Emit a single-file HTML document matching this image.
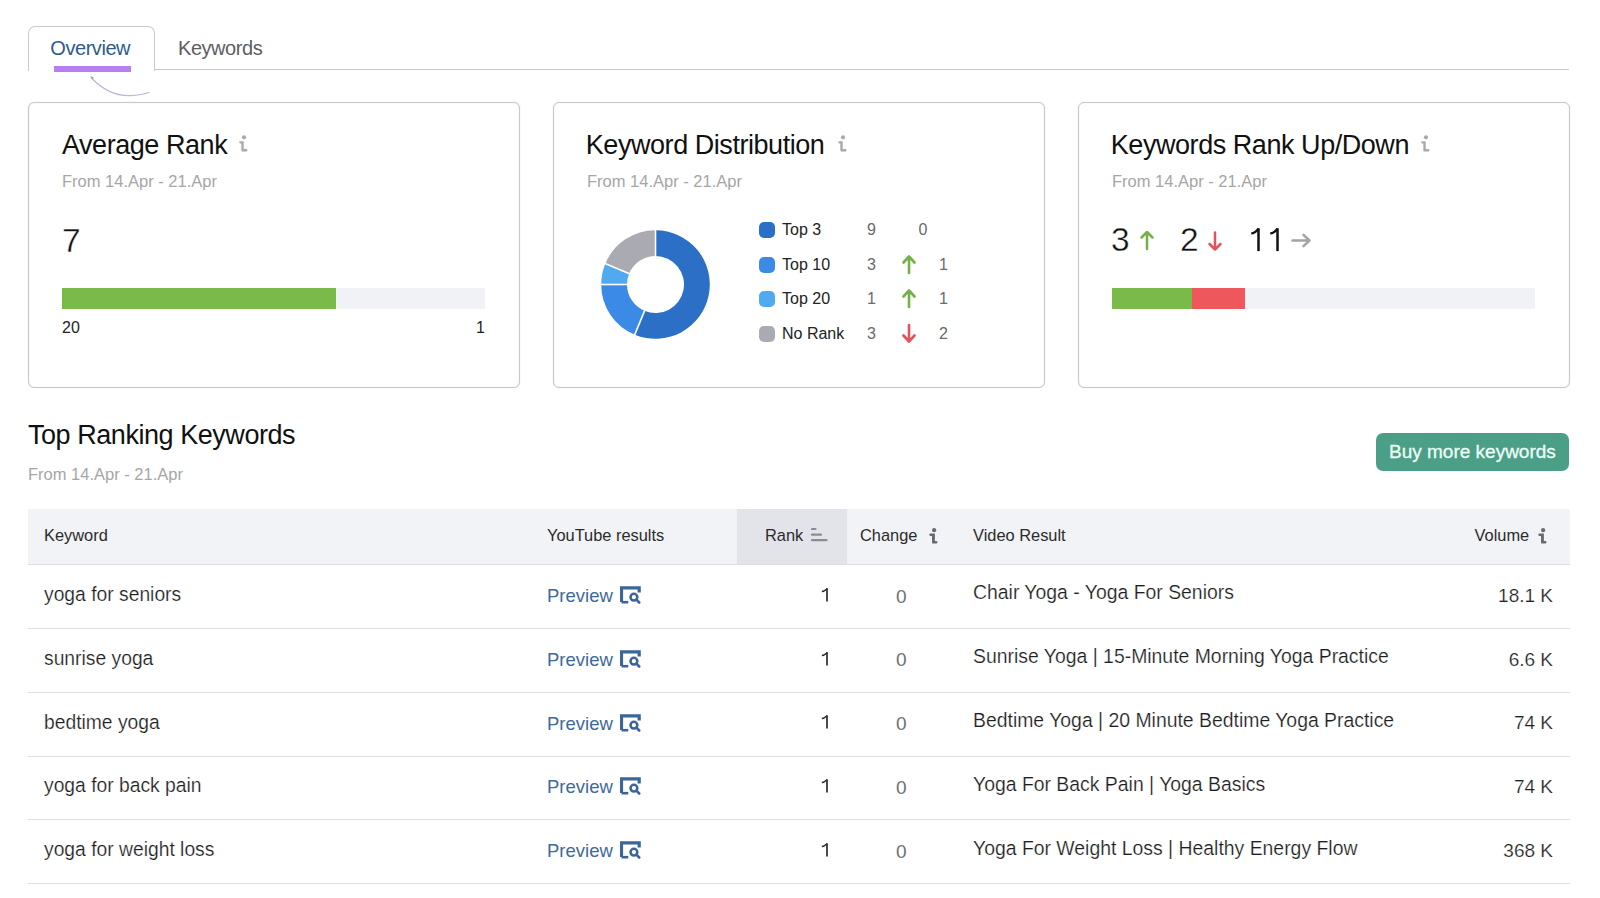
<!DOCTYPE html>
<html><head><meta charset="utf-8">
<style>
html,body{margin:0;padding:0;background:#fff;}
body{width:1600px;height:898px;position:relative;overflow:hidden;font-family:"Liberation Sans",sans-serif;color:#1a1a1a;}
.a{position:absolute;white-space:nowrap;line-height:1;}
.card{position:absolute;top:102px;width:490px;height:284px;border:1px solid #c9c9c9;border-radius:6px;box-shadow:0 0 1px rgba(0,0,0,0.22), inset 0 0 1px rgba(0,0,0,0.18);}
</style></head>
<body>
<div style="position:absolute;left:28px;top:26px;width:125px;height:44px;border:1px solid #c9c9c9;border-bottom:none;border-radius:7px 7px 0 0;"></div>
<div style="position:absolute;left:154px;top:69px;width:1415px;height:1px;background:#c9c9c9;"></div>
<div class="a" style="left:50.3px;top:37.57px;font-size:20px;color:#2f5b8c;letter-spacing:-0.45px;">Overview</div>
<div class="a" style="left:178px;top:37.57px;font-size:20px;color:#5d5e63;letter-spacing:-0.45px;">Keywords</div>
<div style="position:absolute;left:54px;top:66px;width:77px;height:6px;background:#b57ff0;"></div>
<svg style="position:absolute;left:0;top:0" width="200" height="110"><path d="M91.5 78 C 103 90, 117 96, 130 95.6 C 139 95.3, 145 94, 149.5 92.3" fill="none" stroke="#c4b2d8" stroke-width="1.15"/><path d="M90.2 76 L94 77.6 L92 79.6 Z" fill="#a898c0"/></svg>
<div class="card" style="left:28px;"></div>
<div class="a" style="left:62px;top:131.94px;font-size:27px;color:#111;letter-spacing:-0.45px;">Average Rank</div>
<div style="position:absolute;left:239px;top:135px;"><svg width="10" height="18" viewBox="0 0 10 18" style="display:block;fill:#a9a9b1"><circle cx="5" cy="2.3" r="2.1"/><path d="M0.2 7.3 Q0.2 6.2 1.3 6.2 H4.7 V14 H7.4 Q8.4 14 8.4 15.3 Q8.4 16.6 7.4 16.6 H3.3 Q2.3 16.6 2.3 15.6 V8.4 H1.3 Q0.2 8.4 0.2 7.3 Z"/></svg></div>
<div class="a" style="left:62px;top:173.03px;font-size:16.5px;color:#a6a6a6;">From 14.Apr - 21.Apr</div>
<div class="card" style="left:553px;"></div>
<div class="a" style="left:585.8px;top:131.94px;font-size:27px;color:#111;letter-spacing:-0.45px;">Keyword Distribution</div>
<div style="position:absolute;left:838px;top:135px;"><svg width="10" height="18" viewBox="0 0 10 18" style="display:block;fill:#a9a9b1"><circle cx="5" cy="2.3" r="2.1"/><path d="M0.2 7.3 Q0.2 6.2 1.3 6.2 H4.7 V14 H7.4 Q8.4 14 8.4 15.3 Q8.4 16.6 7.4 16.6 H3.3 Q2.3 16.6 2.3 15.6 V8.4 H1.3 Q0.2 8.4 0.2 7.3 Z"/></svg></div>
<div class="a" style="left:587px;top:173.03px;font-size:16.5px;color:#a6a6a6;">From 14.Apr - 21.Apr</div>
<div class="card" style="left:1078px;"></div>
<div class="a" style="left:1110.8px;top:131.94px;font-size:27px;color:#111;letter-spacing:-0.45px;">Keywords Rank Up/Down</div>
<div style="position:absolute;left:1421px;top:135px;"><svg width="10" height="18" viewBox="0 0 10 18" style="display:block;fill:#a9a9b1"><circle cx="5" cy="2.3" r="2.1"/><path d="M0.2 7.3 Q0.2 6.2 1.3 6.2 H4.7 V14 H7.4 Q8.4 14 8.4 15.3 Q8.4 16.6 7.4 16.6 H3.3 Q2.3 16.6 2.3 15.6 V8.4 H1.3 Q0.2 8.4 0.2 7.3 Z"/></svg></div>
<div class="a" style="left:1112px;top:173.03px;font-size:16.5px;color:#a6a6a6;">From 14.Apr - 21.Apr</div>
<div class="a" style="left:62px;top:223.64px;font-size:33.5px;color:#111;-webkit-text-stroke:0.4px #fff;">7</div>
<div style="position:absolute;left:62px;top:288px;width:423px;height:21px;background:#f1f2f6;"></div>
<div style="position:absolute;left:62px;top:288px;width:274px;height:21px;background:#7aba4a;"></div>
<div class="a" style="left:62px;top:320.46px;font-size:16px;color:#222;">20</div>
<div class="a" style="left:476px;top:320.46px;font-size:16px;color:#222;">1</div>
<svg style="position:absolute;left:601.2px;top:230px;overflow:visible" width="109" height="109"><path d="M54.50 0.20 A54.3 54.3 0 1 1 33.72 104.67 L43.59 80.83 A28.5 28.5 0 1 0 54.50 26.00 Z" fill="#2c6fc6"/><path d="M33.72 104.67 A54.3 54.3 0 0 1 0.20 54.50 L26.00 54.50 A28.5 28.5 0 0 0 43.59 80.83 Z" fill="#3b8be6"/><path d="M0.20 54.50 A54.3 54.3 0 0 1 4.33 33.72 L28.17 43.59 A28.5 28.5 0 0 0 26.00 54.50 Z" fill="#51a9ef"/><path d="M4.33 33.72 A54.3 54.3 0 0 1 54.50 0.20 L54.50 26.00 A28.5 28.5 0 0 0 28.17 43.59 Z" fill="#a9aab2"/><line x1="54.50" y1="27.00" x2="54.50" y2="-0.80" stroke="#fff" stroke-width="1.6"/><line x1="43.98" y1="79.91" x2="33.34" y2="105.59" stroke="#fff" stroke-width="1.6"/><line x1="27.00" y1="54.50" x2="-0.80" y2="54.50" stroke="#fff" stroke-width="1.6"/><line x1="29.09" y1="43.98" x2="3.41" y2="33.34" stroke="#fff" stroke-width="1.6"/></svg>
<div style="position:absolute;left:759px;top:222.0px;width:16px;height:16px;background:#2c6fc6;border-radius:5px;"></div>
<div class="a" style="left:782px;top:222.46px;font-size:16px;color:#222;">Top 3</div>
<div class="a" style="left:867px;top:222.46px;font-size:16px;color:#6a6a6a;">9</div>
<div class="a" style="left:918.5px;top:222.46px;font-size:16px;color:#6a6a6a;">0</div>
<div style="position:absolute;left:759px;top:256.5px;width:16px;height:16px;background:#3b8be6;border-radius:5px;"></div>
<div class="a" style="left:782px;top:256.96px;font-size:16px;color:#222;">Top 10</div>
<div class="a" style="left:867px;top:256.96px;font-size:16px;color:#6a6a6a;">3</div>
<svg style="position:absolute;left:901.3px;top:253.8px" width="16" height="21" viewBox="0 0 16 21"><path d="M8 2.5 V19 M2.5 8.5 L8 2.5 L13.5 8.5" fill="none" stroke="#74b146" stroke-width="2.6" stroke-linecap="round" stroke-linejoin="round"/></svg>
<div class="a" style="left:939px;top:256.96px;font-size:16px;color:#6a6a6a;">1</div>
<div style="position:absolute;left:759px;top:291.0px;width:16px;height:16px;background:#51a9ef;border-radius:5px;"></div>
<div class="a" style="left:782px;top:291.46px;font-size:16px;color:#222;">Top 20</div>
<div class="a" style="left:867px;top:291.46px;font-size:16px;color:#6a6a6a;">1</div>
<svg style="position:absolute;left:901.3px;top:288.3px" width="16" height="21" viewBox="0 0 16 21"><path d="M8 2.5 V19 M2.5 8.5 L8 2.5 L13.5 8.5" fill="none" stroke="#74b146" stroke-width="2.6" stroke-linecap="round" stroke-linejoin="round"/></svg>
<div class="a" style="left:939px;top:291.46px;font-size:16px;color:#6a6a6a;">1</div>
<div style="position:absolute;left:759px;top:325.5px;width:16px;height:16px;background:#a9aab2;border-radius:5px;"></div>
<div class="a" style="left:782px;top:325.96px;font-size:16px;color:#222;">No Rank</div>
<div class="a" style="left:867px;top:325.96px;font-size:16px;color:#6a6a6a;">3</div>
<svg style="position:absolute;left:901.3px;top:323.0px" width="16" height="21" viewBox="0 0 16 21"><path d="M8 2 V18.5 M2.5 12.5 L8 18.5 L13.5 12.5" fill="none" stroke="#e2535b" stroke-width="2.6" stroke-linecap="round" stroke-linejoin="round"/></svg>
<div class="a" style="left:939px;top:325.96px;font-size:16px;color:#6a6a6a;">2</div>
<div class="a" style="left:1111px;top:223.04px;font-size:33.5px;color:#111;-webkit-text-stroke:0.4px #fff;">3</div>
<svg style="position:absolute;left:1139px;top:229px" width="16" height="22" viewBox="0 0 16 22"><path d="M8 3 V20 M2.5 8.5 L8 3 L13.5 8.5" fill="none" stroke="#74b146" stroke-width="2.5" stroke-linecap="round" stroke-linejoin="round"/></svg>
<div class="a" style="left:1180px;top:223.04px;font-size:33.5px;color:#111;-webkit-text-stroke:0.4px #fff;">2</div>
<svg style="position:absolute;left:1206.5px;top:229.5px" width="16" height="22" viewBox="0 0 16 22"><path d="M8 2.5 V19.5 M2.5 14 L8 19.5 L13.5 14" fill="none" stroke="#e2535b" stroke-width="2.5" stroke-linecap="round" stroke-linejoin="round"/></svg>
<svg style="position:absolute;left:1250.40px;top:227.10px" width="13.00" height="25.10" viewBox="0 0 13.00 25.10"><path d="M8.50 1.3 V24.10" stroke="#111" stroke-width="2.5" fill="none"/><path d="M8.50 1.6 C6.70 3.92, 4.90 6.30, 1.25 6.30" stroke="#111" stroke-width="2.25" fill="none"/></svg>
<svg style="position:absolute;left:1268.50px;top:227.10px" width="13.00" height="25.10" viewBox="0 0 13.00 25.10"><path d="M8.50 1.3 V24.10" stroke="#111" stroke-width="2.5" fill="none"/><path d="M8.50 1.6 C6.70 3.92, 4.90 6.30, 1.25 6.30" stroke="#111" stroke-width="2.25" fill="none"/></svg>
<svg style="position:absolute;left:1290px;top:232px" width="22" height="17" viewBox="0 0 22 17"><path d="M2.5 8.5 H19.5 M13.5 2.8 L19.5 8.5 L13.5 14.2" fill="none" stroke="#a3a3a8" stroke-width="2.5" stroke-linecap="round" stroke-linejoin="round"/></svg>
<div style="position:absolute;left:1112px;top:288px;width:423px;height:21px;background:#f1f2f6;"></div>
<div style="position:absolute;left:1112px;top:288px;width:79.5px;height:21px;background:#7aba4a;"></div>
<div style="position:absolute;left:1191.5px;top:288px;width:53px;height:21px;background:#ee575c;"></div>
<div class="a" style="left:28px;top:421.84px;font-size:27px;color:#111;letter-spacing:-0.45px;">Top Ranking Keywords</div>
<div class="a" style="left:28px;top:465.78px;font-size:16.5px;color:#a6a6a6;">From 14.Apr - 21.Apr</div>
<div style="position:absolute;left:1376px;top:433px;width:193px;height:38px;background:#4a9f86;border-radius:7px;"></div>
<div class="a" style="left:1389px;top:441.92px;font-size:19px;color:#effff8;-webkit-text-stroke:0.3px #effff8;">Buy more keywords</div>
<div style="position:absolute;left:28px;top:509px;width:1542px;height:55px;background:#f2f3f7;"></div>
<div style="position:absolute;left:737px;top:509px;width:110px;height:55px;background:#e3e4ea;"></div>
<div style="position:absolute;left:28px;top:564px;width:1542px;height:1px;background:#dedede;"></div>
<div class="a" style="left:44px;top:527.32px;font-size:16.4px;color:#2b2b2b;">Keyword</div>
<div class="a" style="left:547px;top:527.32px;font-size:16.4px;color:#2b2b2b;">YouTube results</div>
<div class="a" style="left:765px;top:527.32px;font-size:16.4px;color:#2b2b2b;">Rank</div>
<svg style="position:absolute;left:810px;top:527px" width="19" height="15" viewBox="0 0 19 15"><path d="M2 2 H5.5 M2 7.7 H11 M2 13.2 H16.5" stroke="#8b8b96" stroke-width="2.2" stroke-linecap="round"/></svg>
<div class="a" style="left:860px;top:527.32px;font-size:16.4px;color:#2b2b2b;">Change</div>
<div style="position:absolute;left:928.5px;top:528.3px;"><svg width="9" height="16" viewBox="0 0 9 16" style="display:block;fill:#696972"><circle cx="5.1" cy="2.2" r="2.1"/><path d="M0.3 6.7 Q0.3 5.5 1.5 5.5 H5.9 V12.9 H7.2 Q8.5 12.9 8.5 14.25 Q8.5 15.6 7.2 15.6 H4.2 Q3 15.6 3 14.4 V8 H1.5 Q0.3 8 0.3 6.7 Z"/></svg></div>
<div class="a" style="left:973px;top:527.32px;font-size:16.4px;color:#2b2b2b;">Video Result</div>
<div class="a" style="left:1474.5px;top:527.32px;font-size:16.4px;color:#2b2b2b;">Volume</div>
<div style="position:absolute;left:1538.3px;top:528.3px;"><svg width="9" height="16" viewBox="0 0 9 16" style="display:block;fill:#696972"><circle cx="5.1" cy="2.2" r="2.1"/><path d="M0.3 6.7 Q0.3 5.5 1.5 5.5 H5.9 V12.9 H7.2 Q8.5 12.9 8.5 14.25 Q8.5 15.6 7.2 15.6 H4.2 Q3 15.6 3 14.4 V8 H1.5 Q0.3 8 0.3 6.7 Z"/></svg></div>
<div class="a" style="left:44px;top:585.06px;font-size:19.3px;color:#1e1e1e;-webkit-text-stroke:0.2px #fff;">yoga for seniors</div>
<div class="a" style="left:547px;top:587.04px;font-size:18.5px;color:#3d6a9b;">Preview</div>
<div style="position:absolute;left:620px;top:586.0px;"><svg width="21" height="18" viewBox="0 0 21 18" style="display:block"><path d="M1.5 16 V1.8 H19.2 V6.5" fill="none" stroke="#3a6699" stroke-width="3.2" stroke-linejoin="miter"/><path d="M1.5 16.2 H8.3" fill="none" stroke="#3a6699" stroke-width="2.6"/><circle cx="13.9" cy="11.2" r="3.4" fill="none" stroke="#3a6699" stroke-width="2.5"/><path d="M16.4 13.7 L19.2 16.5" stroke="#3a6699" stroke-width="2.6" stroke-linecap="round"/></svg></div>
<svg style="position:absolute;left:820.60px;top:586.80px" width="9.70" height="15.60" viewBox="0 0 9.70 15.60"><path d="M6.00 1.3 V14.60" stroke="#2a2a2a" stroke-width="1.7" fill="none"/><path d="M6.00 1.6 C4.71 2.87, 3.42 4.40, 0.85 4.40" stroke="#2a2a2a" stroke-width="1.53" fill="none"/></svg>
<div class="a" style="left:896px;top:586.62px;font-size:19px;color:#707070;">0</div>
<div class="a" style="left:973px;top:583.48px;font-size:19.4px;color:#1e1e1e;-webkit-text-stroke:0.2px #fff;">Chair Yoga - Yoga For Seniors</div>
<div class="a" style="right:47px;top:585.82px;font-size:19px;color:#1e1e1e;-webkit-text-stroke:0.2px #fff;">18.1 K</div>
<div style="position:absolute;left:28px;top:628.0px;width:1542px;height:1px;background:#dedede;"></div>
<div class="a" style="left:44px;top:648.86px;font-size:19.3px;color:#1e1e1e;-webkit-text-stroke:0.2px #fff;">sunrise yoga</div>
<div class="a" style="left:547px;top:650.84px;font-size:18.5px;color:#3d6a9b;">Preview</div>
<div style="position:absolute;left:620px;top:649.8px;"><svg width="21" height="18" viewBox="0 0 21 18" style="display:block"><path d="M1.5 16 V1.8 H19.2 V6.5" fill="none" stroke="#3a6699" stroke-width="3.2" stroke-linejoin="miter"/><path d="M1.5 16.2 H8.3" fill="none" stroke="#3a6699" stroke-width="2.6"/><circle cx="13.9" cy="11.2" r="3.4" fill="none" stroke="#3a6699" stroke-width="2.5"/><path d="M16.4 13.7 L19.2 16.5" stroke="#3a6699" stroke-width="2.6" stroke-linecap="round"/></svg></div>
<svg style="position:absolute;left:820.60px;top:650.60px" width="9.70" height="15.60" viewBox="0 0 9.70 15.60"><path d="M6.00 1.3 V14.60" stroke="#2a2a2a" stroke-width="1.7" fill="none"/><path d="M6.00 1.6 C4.71 2.87, 3.42 4.40, 0.85 4.40" stroke="#2a2a2a" stroke-width="1.53" fill="none"/></svg>
<div class="a" style="left:896px;top:650.42px;font-size:19px;color:#707070;">0</div>
<div class="a" style="left:973px;top:647.28px;font-size:19.4px;color:#1e1e1e;-webkit-text-stroke:0.2px #fff;">Sunrise Yoga | 15-Minute Morning Yoga Practice</div>
<div class="a" style="right:47px;top:649.62px;font-size:19px;color:#1e1e1e;-webkit-text-stroke:0.2px #fff;">6.6 K</div>
<div style="position:absolute;left:28px;top:691.8px;width:1542px;height:1px;background:#dedede;"></div>
<div class="a" style="left:44px;top:712.66px;font-size:19.3px;color:#1e1e1e;-webkit-text-stroke:0.2px #fff;">bedtime yoga</div>
<div class="a" style="left:547px;top:714.64px;font-size:18.5px;color:#3d6a9b;">Preview</div>
<div style="position:absolute;left:620px;top:713.6px;"><svg width="21" height="18" viewBox="0 0 21 18" style="display:block"><path d="M1.5 16 V1.8 H19.2 V6.5" fill="none" stroke="#3a6699" stroke-width="3.2" stroke-linejoin="miter"/><path d="M1.5 16.2 H8.3" fill="none" stroke="#3a6699" stroke-width="2.6"/><circle cx="13.9" cy="11.2" r="3.4" fill="none" stroke="#3a6699" stroke-width="2.5"/><path d="M16.4 13.7 L19.2 16.5" stroke="#3a6699" stroke-width="2.6" stroke-linecap="round"/></svg></div>
<svg style="position:absolute;left:820.60px;top:714.40px" width="9.70" height="15.60" viewBox="0 0 9.70 15.60"><path d="M6.00 1.3 V14.60" stroke="#2a2a2a" stroke-width="1.7" fill="none"/><path d="M6.00 1.6 C4.71 2.87, 3.42 4.40, 0.85 4.40" stroke="#2a2a2a" stroke-width="1.53" fill="none"/></svg>
<div class="a" style="left:896px;top:714.22px;font-size:19px;color:#707070;">0</div>
<div class="a" style="left:973px;top:711.08px;font-size:19.4px;color:#1e1e1e;-webkit-text-stroke:0.2px #fff;">Bedtime Yoga | 20 Minute Bedtime Yoga Practice</div>
<div class="a" style="right:47px;top:713.42px;font-size:19px;color:#1e1e1e;-webkit-text-stroke:0.2px #fff;">74 K</div>
<div style="position:absolute;left:28px;top:755.6px;width:1542px;height:1px;background:#dedede;"></div>
<div class="a" style="left:44px;top:776.46px;font-size:19.3px;color:#1e1e1e;-webkit-text-stroke:0.2px #fff;">yoga for back pain</div>
<div class="a" style="left:547px;top:778.44px;font-size:18.5px;color:#3d6a9b;">Preview</div>
<div style="position:absolute;left:620px;top:777.4px;"><svg width="21" height="18" viewBox="0 0 21 18" style="display:block"><path d="M1.5 16 V1.8 H19.2 V6.5" fill="none" stroke="#3a6699" stroke-width="3.2" stroke-linejoin="miter"/><path d="M1.5 16.2 H8.3" fill="none" stroke="#3a6699" stroke-width="2.6"/><circle cx="13.9" cy="11.2" r="3.4" fill="none" stroke="#3a6699" stroke-width="2.5"/><path d="M16.4 13.7 L19.2 16.5" stroke="#3a6699" stroke-width="2.6" stroke-linecap="round"/></svg></div>
<svg style="position:absolute;left:820.60px;top:778.20px" width="9.70" height="15.60" viewBox="0 0 9.70 15.60"><path d="M6.00 1.3 V14.60" stroke="#2a2a2a" stroke-width="1.7" fill="none"/><path d="M6.00 1.6 C4.71 2.87, 3.42 4.40, 0.85 4.40" stroke="#2a2a2a" stroke-width="1.53" fill="none"/></svg>
<div class="a" style="left:896px;top:778.02px;font-size:19px;color:#707070;">0</div>
<div class="a" style="left:973px;top:774.88px;font-size:19.4px;color:#1e1e1e;-webkit-text-stroke:0.2px #fff;">Yoga For Back Pain | Yoga Basics</div>
<div class="a" style="right:47px;top:777.22px;font-size:19px;color:#1e1e1e;-webkit-text-stroke:0.2px #fff;">74 K</div>
<div style="position:absolute;left:28px;top:819.4px;width:1542px;height:1px;background:#dedede;"></div>
<div class="a" style="left:44px;top:840.26px;font-size:19.3px;color:#1e1e1e;-webkit-text-stroke:0.2px #fff;">yoga for weight loss</div>
<div class="a" style="left:547px;top:842.24px;font-size:18.5px;color:#3d6a9b;">Preview</div>
<div style="position:absolute;left:620px;top:841.2px;"><svg width="21" height="18" viewBox="0 0 21 18" style="display:block"><path d="M1.5 16 V1.8 H19.2 V6.5" fill="none" stroke="#3a6699" stroke-width="3.2" stroke-linejoin="miter"/><path d="M1.5 16.2 H8.3" fill="none" stroke="#3a6699" stroke-width="2.6"/><circle cx="13.9" cy="11.2" r="3.4" fill="none" stroke="#3a6699" stroke-width="2.5"/><path d="M16.4 13.7 L19.2 16.5" stroke="#3a6699" stroke-width="2.6" stroke-linecap="round"/></svg></div>
<svg style="position:absolute;left:820.60px;top:842.00px" width="9.70" height="15.60" viewBox="0 0 9.70 15.60"><path d="M6.00 1.3 V14.60" stroke="#2a2a2a" stroke-width="1.7" fill="none"/><path d="M6.00 1.6 C4.71 2.87, 3.42 4.40, 0.85 4.40" stroke="#2a2a2a" stroke-width="1.53" fill="none"/></svg>
<div class="a" style="left:896px;top:841.82px;font-size:19px;color:#707070;">0</div>
<div class="a" style="left:973px;top:838.68px;font-size:19.4px;color:#1e1e1e;-webkit-text-stroke:0.2px #fff;">Yoga For Weight Loss | Healthy Energy Flow</div>
<div class="a" style="right:47px;top:841.02px;font-size:19px;color:#1e1e1e;-webkit-text-stroke:0.2px #fff;">368 K</div>
<div style="position:absolute;left:28px;top:883.2px;width:1542px;height:1px;background:#dedede;"></div>
</body></html>
